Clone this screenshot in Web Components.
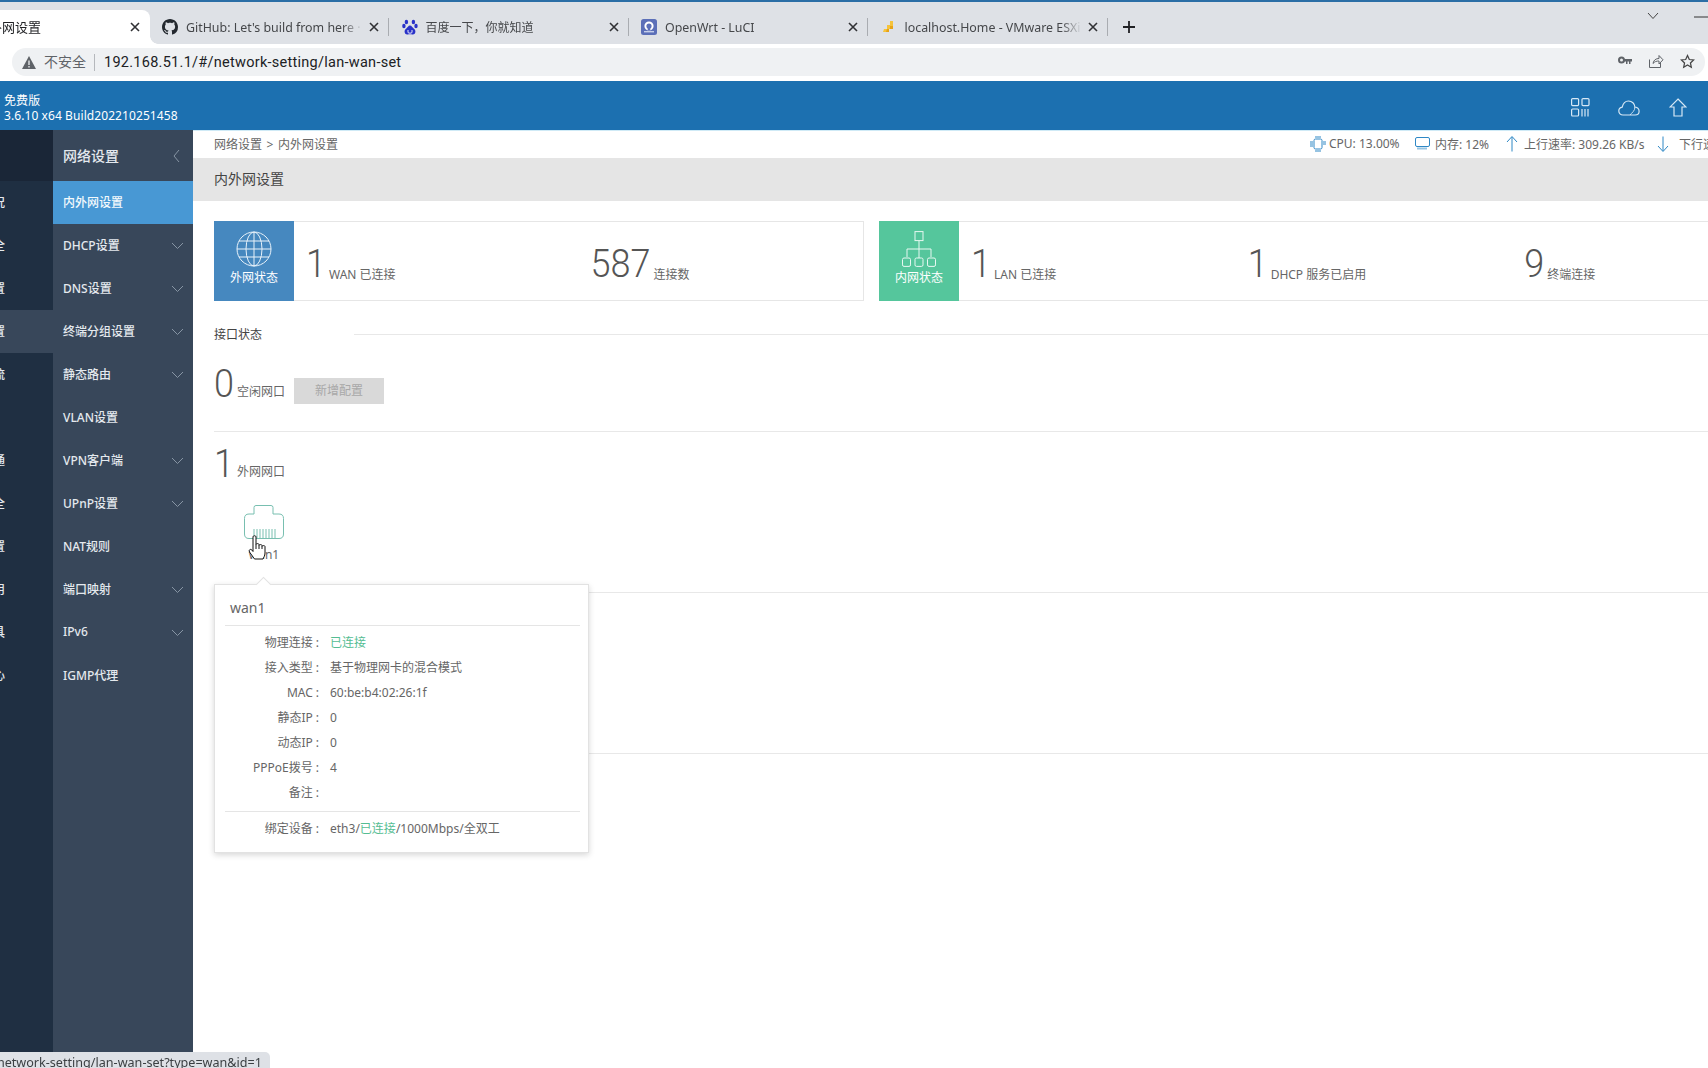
<!DOCTYPE html>
<html lang="zh-CN">
<head>
<meta charset="utf-8">
<title>内外网设置</title>
<style>
html, body { margin: 0; height: 100%; overflow: hidden; background: #fff; }
body { font: 12px "Noto Sans", "Noto Sans CJK SC", sans-serif; color: #666; display: flex; flex-direction: column; }
</style>
</head>
<body>
<browser-chrome>
  <browser-tab active label="内外网设置"></browser-tab>
  <browser-tab label="GitHub: Let's build from here · GitHub">
    <svg slot="icon" width="16" height="16" viewBox="0 0 16 16" fill="#24292f"><path d="M8 0C3.58 0 0 3.58 0 8c0 3.54 2.29 6.53 5.47 7.59.4.07.55-.17.55-.38 0-.19-.01-.82-.01-1.49-2.01.37-2.53-.49-2.69-.94-.09-.23-.48-.94-.82-1.13-.28-.15-.68-.52-.01-.53.63-.01 1.08.58 1.23.82.72 1.21 1.87.87 2.33.66.07-.52.28-.87.51-1.07-1.78-.2-3.64-.89-3.64-3.95 0-.87.31-1.59.82-2.15-.08-.2-.36-1.02.08-2.12 0 0 .67-.21 2.2.82.64-.18 1.32-.27 2-.27s1.36.09 2 .27c1.53-1.04 2.2-.82 2.2-.82.44 1.1.16 1.92.08 2.12.51.56.82 1.27.82 2.15 0 3.07-1.87 3.75-3.65 3.95.29.25.54.73.54 1.48 0 1.07-.01 1.93-.01 2.2 0 .21.15.46.55.38A8.01 8.01 0 0 0 16 8c0-4.42-3.58-8-8-8z"/></svg>
  </browser-tab>
  <browser-tab label="百度一下，你就知道" style="font-size:12px">
    <svg slot="icon" width="16" height="16" viewBox="0 0 16 16" fill="#2932c8"><ellipse cx="4.4" cy="3" rx="1.7" ry="2.3"/><ellipse cx="11.4" cy="3" rx="1.7" ry="2.3"/><ellipse cx="1.9" cy="7" rx="1.7" ry="2.2"/><ellipse cx="14" cy="7" rx="1.7" ry="2.2"/><path d="M8 6.6c-1.8 0-2.3 2-3.7 3C3 10.600 2.600 11.500 2.600 12.800 2.600 14.500 4 15.800 5.800 15.400c1.500-.3 2.900-.3 4.400 0 1.800.4 3.200-.9 3.200-2.600 0-1.300-.4-2.200-1.700-3.200-1.400-1-1.900-3-3.700-3z"/><path d="M6 11v2.100c0 .6.400 1 1 1h2c.6 0 1-.4 1-1V11" fill="none" stroke="#fff" stroke-width=".9"/></svg>
  </browser-tab>
  <browser-tab label="OpenWrt - LuCI">
    <svg slot="icon" width="16" height="16" viewBox="0 0 16 16"><rect width="16" height="16" rx="2.500" fill="#5b6fb8"/><circle cx="8" cy="7" r="3.600" fill="none" stroke="#fff" stroke-width="2"/><rect x="6.700" y="9" width="2.600" height="2.500" fill="#5b6fb8"/><rect x="3" y="12" width="10" height="1.400" fill="#c6cfea"/></svg>
  </browser-tab>
  <browser-tab label="localhost.Home - VMware ESXi">
    <svg slot="icon" width="16" height="16" viewBox="0 0 16 16"><path d="M9 2h3v5h-1v3H8v3H2l1-3h3V6h3z" fill="#f5c33b"/><path d="M9 7h3v3H8v3H5l1-3h3z" fill="#e8a317"/></svg>
  </browser-tab>
</browser-chrome>
<app-header>
  <span>免费版</span>
  <span>3.6.10 x64 Build202210251458</span>
</app-header>
<app-shell>
  <side-nav slot="nav">
    <nav-row slot="title" label="网络设置" arrow="left" title-row></nav-row>
    <nav-row crop="概况" label="内外网设置" active></nav-row>
    <nav-row crop="安全" label="DHCP设置" arrow="down"></nav-row>
    <nav-row crop="配置" label="DNS设置" arrow="down"></nav-row>
    <nav-row crop="设置" label="终端分组设置" arrow="down" hot></nav-row>
    <nav-row crop="分流" label="静态路由" arrow="down"></nav-row>
    <nav-row label="VLAN设置"></nav-row>
    <nav-row crop="互通" label="VPN客户端" arrow="down"></nav-row>
    <nav-row crop="安全" label="UPnP设置" arrow="down"></nav-row>
    <nav-row crop="配置" label="NAT规则"></nav-row>
    <nav-row crop="应用" label="端口映射" arrow="down"></nav-row>
    <nav-row crop="工具" label="IPv6" arrow="down"></nav-row>
    <nav-row crop="中心" label="IGMP代理"></nav-row>
  </side-nav>
  <status-bar></status-bar>
  <page-title>内外网设置</page-title>
  <stat-cards>
    <stat-card tile="外网状态" kind="wan" style="width:650px">
      <stat-item num="1" text="WAN 已连接"></stat-item>
      <stat-item num="587" text="连接数"></stat-item>
    </stat-card>
    <stat-card tile="内网状态" kind="lan" style="width:911px">
      <stat-item num="1" text="LAN 已连接"></stat-item>
      <stat-item num="1" text="DHCP 服务已启用"></stat-item>
      <stat-item num="9" text="终端连接"></stat-item>
    </stat-card>
  </stat-cards>
  <section-heading>接口状态</section-heading>
  <port-section num="0" text="空闲网口" first>
    <button-off slot="action">新增配置</button-off>
  </port-section>
  <port-section num="1" text="外网网口">
    <port-item name="wan1">
      <wan-popover></wan-popover>
    </port-item>
  </port-section>
  <port-section></port-section>
</app-shell>
<link-status>network-setting/lan-wan-set?type=wan&amp;id=1</link-status>

<script>
// Small helper: every element gets an open shadow root from its own html
function shadow(el, html) {
  el.attachShadow({ mode: 'open' }).innerHTML = html;
}

class BrowserChrome extends HTMLElement {
  connectedCallback() {
    shadow(this, `
<style>
:host { display: block; flex: none; height: 81px; background: #fff; font-family: "Noto Sans", "Noto Sans CJK SC", sans-serif; }
.top { height: 2px; background: #2b6ea6; }
.strip { height: 42px; background: #dee1e6; display: flex; align-items: flex-end; position: relative; overflow: hidden; }
.tabs { display: flex; margin-left: -90px; }
.plus { width: 30px; height: 34px; margin-left: 6px; display: flex; align-items: center; justify-content: center; }
.win { position: absolute; top: 10px; }
.addr { margin: 4px 3px 0 12px; height: 28px; border-radius: 14px; background: #eff1f3; display: flex; align-items: center; color: #5f6368; position: relative; }
.warn { margin-left: 10px; flex: none; }
.sec { margin-left: 8px; padding-bottom: 2px; font-size: 14px; color: #5f6368; }
.sep { width: 1px; height: 17px; background: #b5b8bc; margin: 0 9px 0 8px; }
.url { font: 14.5px Roboto, sans-serif; color: #202124; letter-spacing: .27px; }
.acts { position: absolute; right: 10px; top: 5px; display: flex; gap: 16px; align-items: center; }
</style>
<div class="top"></div>
<div class="strip">
  <div class="tabs"><slot></slot></div>
  <div class="plus"><svg width="14" height="14" viewBox="0 0 14 14"><path d="M7 1v12M1 7h12" stroke="#202124" stroke-width="1.800"/></svg></div>
  <svg class="win" style="left:1647px" width="12" height="8" viewBox="0 0 12 8"><path d="M1 1l5 5.500L11 1" fill="none" stroke="#444" stroke-width="1"/></svg>
  <svg class="win" style="left:1694px;top:14px" width="14" height="2" viewBox="0 0 14 2"><path d="M0 1h14" stroke="#333" stroke-width="1"/></svg>
</div>
<div class="addr">
  <svg class="warn" width="14" height="13" viewBox="0 0 14 13"><path d="M7 0l7 13H0z" fill="#5f6368"/><path d="M7 4.500v4.500M7 10v1.500" stroke="#eff1f3" stroke-width="1.300"/></svg>
  <span class="sec">不安全</span><span class="sep"></span>
  <span class="url">192.168.51.1/#/network-setting/lan-wan-set</span>
  <div class="acts">
    <svg width="14" height="10" viewBox="0 0 14 10"><circle cx="3.500" cy="4" r="2.500" fill="none" stroke="#5f6368" stroke-width="2"/><path d="M6 3h8v2.500h-1.500V8H11V5.500H9.500V8H8V5.500H6z" fill="#5f6368"/></svg>
    <svg width="16" height="16" viewBox="0 0 16 16" fill="none" stroke="#5f6368" stroke-width="1"><path d="M1.500 6.500v8h11v-5"/><path d="M5 10.500c.5-3.500 3-5 6-5V2.500l4 4.300-4 4.200V8c-2.500 0-4.500.6-6 2.500z"/></svg>
    <svg width="15" height="15" viewBox="0 0 24 24" fill="none" stroke="#444" stroke-width="2"><path d="M12 2.500l2.900 6.300 6.900.8-5.100 4.700 1.400 6.800-6.100-3.400-6.100 3.400 1.400-6.800-5.100-4.700 6.900-.8z"/></svg>
  </div>
</div>`);
  }
}

class BrowserTab extends HTMLElement {
  connectedCallback() {
    shadow(this, `
<style>
:host { display: block; flex: none; width: 239.5px; height: 34px; position: relative; box-sizing: border-box; font-size: 12.4px; color: #45474a; }
:host([active]) { background: #fff; border-radius: 8px 8px 0 0; color: #202124; font-size: 13px; }
:host([active])::after { content: ""; position: absolute; left: 100%; bottom: 0; width: 8px; height: 8px; background: radial-gradient(circle at 100% 0, transparent 7.5px, #fff 8px); }
:host(:not([active]))::after { content: ""; position: absolute; right: 0; top: 8px; height: 18px; width: 1px; background: #a9acb1; }
.in { display: flex; align-items: center; height: 100%; padding-left: 12.5px; }
:host([active]) .in { padding: 0 0 2px 66px; height: 32px; }
:host([active]) .icon { display: none; }
.icon { width: 16px; height: 16px; flex: none; margin-right: 8px; display: block; }
.t { width: 177px; flex: none; white-space: nowrap; overflow: hidden; -webkit-mask-image: linear-gradient(to right, #000 156px, transparent 177px); mask-image: linear-gradient(to right, #000 156px, transparent 177px); }
.x { position: absolute; left: 219.500px; top: 12px; width: 10px; height: 10px; }
</style>
<div class="in">
  <div class="icon"><slot name="icon"></slot></div>
  <div class="t">${this.getAttribute('label')}</div>
</div>
<svg class="x" viewBox="0 0 10 10"><path d="M1 1l8 8M9 1l-8 8" stroke="#303134" stroke-width="1.600"/></svg>`);
  }
}

class AppHeader extends HTMLElement {
  connectedCallback() {
    shadow(this, `
<style>
:host { display: block; flex: none; height: 49px; background: #1c70b0; color: #fff; position: relative; font-size: 12px; letter-spacing: .08px; line-height: 15px; box-sizing: border-box; padding: 12px 0 0 4px; }
.lines { display: flex; flex-direction: column; align-items: flex-start; }
.icons { position: absolute; right: 21px; top: 17px; display: flex; gap: 29px; align-items: center; }
</style>
<div class="lines"><slot></slot></div>
<div class="icons">
  <svg width="19" height="19" viewBox="0 0 19 19" fill="none" stroke="#d7e8f5" stroke-width="1.200" style="margin-right:-1px"><rect x=".6" y=".6" width="7" height="7" rx="1"/><rect x="11" y=".6" width="7" height="7" rx="1"/><rect x=".6" y="11" width="7" height="7" rx="1"/><path d="M11 11v7.500M14 11v7.500M17 11v7.500"/></svg>
  <svg width="22" height="16" viewBox="0 0 22 16" fill="none" stroke="#d7e8f5" stroke-width="1.200"><path d="M5 15C2.500 15 .8 13.200.8 11c0-2 1.500-3.600 3.400-3.900C5 3.500 7.500 1 10.500 1c3.500 0 6.200 2.700 6.400 6 2.300.3 4.200 2 4.200 4.200 0 2.100-1.700 3.800-4 3.800z"/><path d="M12 15c2-2.500 5-4 4.900-8" stroke-width=".9"/></svg>
  <svg width="18" height="19" viewBox="0 0 18 19" fill="none" stroke="#d7e8f5" stroke-width="1.200"><path d="M9 1l8 8h-4v9H5V9H1z"/></svg>
</div>`);
  }
}

class AppShell extends HTMLElement {
  connectedCallback() {
    shadow(this, `
<style>
:host { display: flex; flex: 1; min-height: 0; overflow: hidden; }
.nav { flex: none; width: 193px; display: flex; }
.main { flex: 1; min-width: 0; overflow: hidden; border-top: 1px solid #cfeaf6; box-sizing: border-box; }
</style>
<div class="nav"><slot name="nav"></slot></div>
<div class="main"><slot></slot></div>`);
  }
}

class SideNav extends HTMLElement {
  connectedCallback() {
    shadow(this, `
<style>
:host { display: flex; flex-direction: column; width: 193px; height: 100%; background: linear-gradient(to right, #1f2f42 53px, #38475a 53px); }
</style>
<slot name="title"></slot>
<slot></slot>`);
  }
}

class NavRow extends HTMLElement {
  connectedCallback() {
    const arrow = this.getAttribute('arrow');
    const paths = { down: 'M1 1l5.500 5.500L12 1', left: 'M6 1L1 7l5 6' };
    const svg = arrow === 'left'
      ? `<svg class="a" style="right:13px" width="7" height="14" viewBox="0 0 7 14"><path d="${paths.left}" fill="none" stroke="#8795a4" stroke-width="1"/></svg>`
      : arrow
        ? `<svg class="a" width="13" height="8" viewBox="0 0 13 8"><path d="${paths.down}" fill="none" stroke="#8795a4" stroke-width="1"/></svg>`
        : '';
    shadow(this, `
<style>
:host { display: grid; grid-template-columns: 53px 140px; height: 43px; font-size: 12px; font-weight: 500; color: #e4e9ee; }
:host([title-row]) { height: 51px; font-size: 14px; }
.crop { display: flex; justify-content: flex-end; align-items: center; overflow: hidden; padding: 0 48px 2px 0; white-space: nowrap; min-width: 0; }
:host([title-row]) .crop { background: #1a2637; }
:host([hot]) .crop { background: #38475a; }
.lab { display: flex; align-items: center; padding: 0 0 2px 10px; position: relative; white-space: nowrap; }
:host([active]) .lab { background: #4898d4; color: #f2f8fc; }
.a { position: absolute; right: 9px; top: 50%; transform: translateY(-50%); }
</style>
<div class="crop">${this.getAttribute('crop') || ''}</div>
<div class="lab">${this.getAttribute('label')}${svg}</div>`);
  }
}

class StatusBar extends HTMLElement {
  connectedCallback() {
    shadow(this, `
<style>
:host { display: flex; height: 27px; align-items: center; position: relative; font-size: 12px; color: #666; white-space: nowrap; box-sizing: border-box; padding-bottom: 2px; }
.crumb { margin-left: 21px; word-spacing: 1.5px; }
.m { position: absolute; display: flex; align-items: center; top: 0; height: 25px; }
svg { flex: none; display: block; }
</style>
<span class="crumb">网络设置 &gt; 内外网设置</span>
<span class="m" style="left:1116px">
  <svg width="18" height="18" viewBox="0 0 18 18" fill="none" stroke="#2f88c5" stroke-width="1"><rect x="5" y="4" width="8" height="10" rx="1.500"/><path d="M1 7h3M1 9h3M1 11h3M14 7h3M14 9h3M7 1v2M9 1v2M11 1v2M7 15v2M9 15v2M11 15v2"/></svg>
  <span style="margin-left:2px">CPU: 13.00%</span>
</span>
<span class="m" style="left:1222px">
  <svg width="15" height="13" viewBox="0 0 15 13" fill="none" stroke="#2f88c5" stroke-width="1"><rect x=".5" y=".5" width="14" height="9" rx="1.500"/><path d="M3 10.500v2M5 10.500v2M7 10.500v2M9 10.500v2M11 10.500v2"/></svg>
  <span style="margin-left:5px">内存: 12%</span>
</span>
<span class="m" style="left:1313px">
  <svg width="12" height="16" viewBox="0 0 12 16" fill="none" stroke="#2f88c5" stroke-width="1"><path d="M6 15.500V1M1 6l5-5.500L11 6"/></svg>
  <span style="margin-left:6px">上行速率: 309.26 KB/s</span>
</span>
<span class="m" style="left:1464px">
  <svg width="12" height="16" viewBox="0 0 12 16" fill="none" stroke="#2f88c5" stroke-width="1"><path d="M6 .5V15M1 10l5 5.500L11 10"/></svg>
  <span style="margin-left:10px">下行速率: 86.26 KB/s</span>
</span>`);
  }
}

class PageTitle extends HTMLElement {
  connectedCallback() {
    shadow(this, `
<style>
:host { display: block; height: 43px; line-height: 41px; background: #e5e5e5; padding-left: 21px; font-size: 14px; color: #444; }
</style>
<slot></slot>`);
  }
}

class StatCards extends HTMLElement {
  connectedCallback() {
    shadow(this, `
<style>
:host { display: flex; gap: 15px; margin: 20px 0 0 21px; width: 1600px; }
</style>
<slot></slot>`);
  }
}

class StatCard extends HTMLElement {
  connectedCallback() {
    const wan = this.getAttribute('kind') === 'wan';
    const icon = wan
      ? `<svg width="36" height="36" viewBox="0 0 36 36" fill="none" stroke="#e8f2fa" stroke-width="1"><circle cx="18" cy="18" r="17"/><ellipse cx="18" cy="18" rx="8" ry="17"/><path d="M18 1v34M3 10h30M1 18h34M3 26h30"/></svg>`
      : `<svg width="36" height="36" viewBox="0 0 36 36" fill="none" stroke="#e8f8f2" stroke-width="1"><rect x="14" y=".6" width="8" height="9"/><path d="M18 10v17M6 26v-8h24v8"/><rect x="1.500" y="27" width="8" height="8.400" rx="1.500"/><rect x="14" y="27" width="8" height="8.400" rx="1.500"/><rect x="26.500" y="27" width="8" height="8.400" rx="1.500"/></svg>`;
    shadow(this, `
<style>
:host { display: flex; flex: none; height: 80px; box-sizing: border-box; border: 1px solid #e6e6e6; border-left: 0; }
.tile { width: 80px; flex: none; margin: -1px 0; background: ${wan ? '#4688bf' : '#55c69c'}; color: #fff; text-align: center; font-size: 12px; box-sizing: border-box; padding-top: 10px; }
.tile svg { display: block; margin: 0 auto 1px; }
.items { flex: 1; display: grid; grid-auto-flow: column; grid-auto-columns: 1fr; }
</style>
<div class="tile">${icon}${this.getAttribute('tile')}</div>
<div class="items"><slot></slot></div>`);
  }
}

class StatItem extends HTMLElement {
  connectedCallback() {
    shadow(this, `
<style>
:host { display: flex; align-items: baseline; gap: 3px; padding: 23px 0 0 12px; color: #666; white-space: nowrap; }
b { font: 300 36px/38px Roboto, sans-serif; color: #555; transform: translateY(1px) scaleY(1.06); transform-origin: 0 32px; }
span { transform: translateY(3px); }
</style>
<b>${this.getAttribute('num')}</b><span>${this.getAttribute('text')}</span>`);
  }
}

class SectionHeading extends HTMLElement {
  connectedCallback() {
    shadow(this, `
<style>
:host { display: flex; align-items: center; margin: 24px 0 0 21px; height: 18px; padding-bottom: 2px; color: #444; width: 1600px; }
i { width: 90px; flex: none; }
u { flex: 1; height: 1px; background: #e8e8e8; }
span { width: 50px; flex: none; }
</style>
<span><slot></slot></span><i></i><u></u>`);
  }
}

class PortSection extends HTMLElement {
  connectedCallback() {
    const num = this.getAttribute('num');
    const head = num === null ? '' : `<div class="head"><b>${num}</b><span>${this.getAttribute('text')}</span><slot name="action"></slot></div>`;
    shadow(this, `
<style>
:host { display: block; margin-left: 21px; width: 1600px; box-sizing: border-box; height: 161px; padding-top: 13px; border-bottom: 1px solid #e8e8e8; }
:host([first]) { height: 87px; padding-top: 20px; }
.head { display: flex; align-items: baseline; height: 38px; color: #666; }
b { font: 300 36px/38px Roboto, sans-serif; color: #555; width: 23px; transform: translateY(1px) scaleY(1.06); transform-origin: 0 32px; }
span { margin-right: 9px; }
</style>
${head}
<slot></slot>`);
  }
}

class ButtonOff extends HTMLElement {
  connectedCallback() {
    shadow(this, `
<style>
:host { display: block; align-self: flex-start; margin-top: 13px; width: 90px; height: 26px; line-height: 26px; background: #d9d9d9; color: #a8a8a8; text-align: center; }
</style>
<slot></slot>`);
  }
}

class PortItem extends HTMLElement {
  connectedCallback() {
    const pins = [11, 14, 17, 20, 23, 26, 29, 32].map(x => `M${x - 1} 24v10`).join('');
    shadow(this, `
<style>
:host { display: block; width: 40px; margin: 22px 0 0 30px; position: relative; text-align: center; color: #666; line-height: 16px; }
svg.port { display: block; margin-bottom: 8px; }
svg.hand { position: absolute; left: 4px; top: 30px; }
</style>
<svg class="port" width="40" height="34" viewBox="0 0 40 34" fill="none" stroke="#78bfb0" stroke-width="1"><path d="M10 9V2.500Q10 .5 12 .5h15q2 0 2 2V9h6q4.500 0 4.500 4.500V29q0 4.500-4.500 4.500H5Q.5 33.500.5 29V13.500Q.5 9 5 9z"/><path d="${pins}"/></svg>
<div>${this.getAttribute('name')}</div>
<svg class="hand" width="19" height="25" viewBox="0 0 19 25"><path d="M5 12V1.800C5 .4 8 .4 8 1.800V9.500c0-1.200 3-1.200 3 0v1c0-1.200 3-1.200 3 0v1c0-1.200 3-1.200 3 0V18c0 3-1.500 4.500-2 6H6.500L1.500 17c-1.200-1.800.9-3.400 2.200-2.200L5 16.500z" fill="#fff" stroke="#111" stroke-width="1" stroke-linejoin="round"/><path d="M8 9.500V14M11 10.500V14M14 11.500V14" stroke="#111" stroke-width="1"/></svg>
<slot></slot>`);
  }
}

class WanPopover extends HTMLElement {
  connectedCallback() {
    const rows = [
      ['物理连接', '<em>已连接</em>'],
      ['接入类型', '基于物理网卡的混合模式'],
      ['MAC', '60:be:b4:02:26:1f'],
      ['静态IP', '0'],
      ['动态IP', '0'],
      ['PPPoE拨号', '4'],
      ['备注', ''],
    ];
    const row = r => `<div class="r"><label>${r[0]}<i>:</i></label><span>${r[1]}</span></div>`;
    shadow(this, `
<style>
:host { display: block; position: absolute; left: -30px; top: 79px; width: 375px; height: 269px; box-sizing: border-box; background: #fff; border: 1px solid #e2e2e2; box-shadow: 0 2px 6px rgba(0,0,0,.16); text-align: left; color: #666; font-size: 12px; padding: 0 8px 0 10px; z-index: 2; }
:host::before { content: ""; position: absolute; left: 43px; top: -6px; width: 10px; height: 10px; background: #fff; border: 1px solid #e2e2e2; border-width: 1px 0 0 1px; transform: rotate(45deg); }
h4 { margin: 0; font-weight: 400; font-size: 14px; height: 40px; line-height: 46px; padding-left: 5px; border-bottom: 1px solid #e5e5e5; position: relative; }
.list { padding: 4px 0 0; }
.foot { border-top: 1px solid #e5e5e5; margin-top: 6px; padding-top: 4px; }
.r { display: flex; height: 25px; line-height: 25px; }
label { width: 94px; text-align: right; margin-right: 11px; flex: none; }
label i { font-style: normal; margin-left: 3px; }
em { font-style: normal; color: #55bd93; }
</style>
<h4>wan1</h4>
<div class="list">${rows.map(row).join('')}</div>
<div class="foot">${row(['绑定设备', 'eth3/<em>已连接</em>/1000Mbps/全双工'])}</div>`);
  }
}

class LinkStatus extends HTMLElement {
  connectedCallback() {
    shadow(this, `
<style>
:host { position: fixed; left: 0; bottom: 0; width: 270px; height: 16px; background: #dee1e6; border-radius: 0 5px 0 0; overflow: hidden; display: flex; justify-content: flex-end; color: #3c4043; font: 12.6px/22px "Noto Sans", sans-serif; white-space: nowrap; padding-right: 8px; box-sizing: border-box; }
</style>
<span><slot></slot></span>`);
  }
}

[
  ['browser-chrome', BrowserChrome],
  ['browser-tab', BrowserTab],
  ['app-header', AppHeader],
  ['app-shell', AppShell],
  ['side-nav', SideNav],
  ['nav-row', NavRow],
  ['status-bar', StatusBar],
  ['page-title', PageTitle],
  ['stat-cards', StatCards],
  ['stat-card', StatCard],
  ['stat-item', StatItem],
  ['section-heading', SectionHeading],
  ['port-section', PortSection],
  ['button-off', ButtonOff],
  ['port-item', PortItem],
  ['wan-popover', WanPopover],
  ['link-status', LinkStatus],
].forEach(([name, cls]) => customElements.define(name, cls));
</script>
</body>
</html>
